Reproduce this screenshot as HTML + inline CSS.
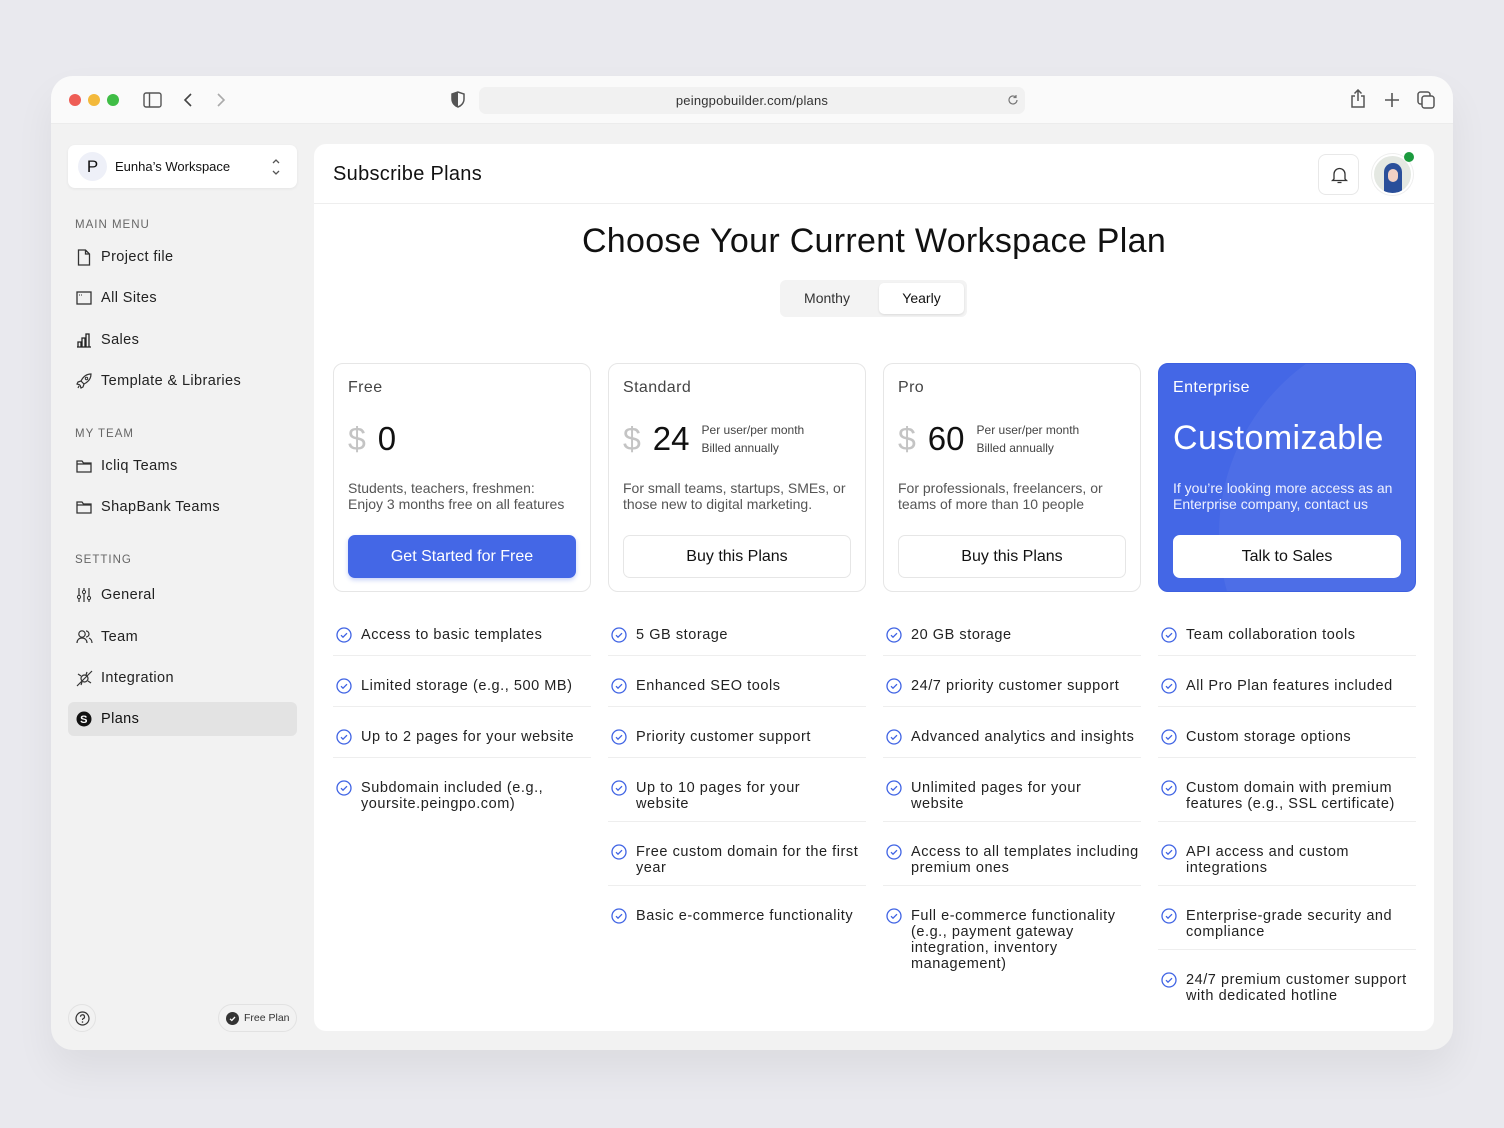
<!DOCTYPE html>
<html><head><meta charset="utf-8">
<style>
*{box-sizing:border-box;margin:0;padding:0}
body{width:1504px;height:1128px;background:#e9e9ee;font-family:"Liberation Sans",sans-serif;color:#1a1a1a;position:relative;overflow:hidden}
.win{position:absolute;left:51px;top:76px;width:1402px;height:974px;background:#f2f2f2;border-radius:22px;overflow:hidden;box-shadow:0 20px 40px rgba(0,0,0,.06)}
.bar{position:absolute;left:0;top:0;width:100%;height:48px;background:#fafafa;border-bottom:1px solid #ececec}
.dot{position:absolute;top:18px;width:12px;height:12px;border-radius:50%}
.url{position:absolute;left:428px;top:11px;width:546px;height:27px;background:#f1f1f1;border-radius:7px;text-align:center;font-size:13px;line-height:27px;color:#333;letter-spacing:.2px}
.abs{position:absolute}
.lbl{position:absolute;left:24px;font-size:11.5px;letter-spacing:1px;color:#666}
.it{position:absolute;left:17px;width:229px;height:34px;font-size:14.5px;color:#222;line-height:34px;padding-left:33px;letter-spacing:.4px}
.it svg{position:absolute;left:8px;top:9px}
.main{position:absolute;left:263px;top:68px;width:1120px;height:887px;background:#fff;border-radius:12px}
.card{position:absolute;top:219px;width:258px;height:229px;border:1px solid #e6e6e6;border-radius:10px;padding:0 14px;overflow:hidden}
.card .nm{position:absolute;left:14px;top:15px;font-size:16px;color:#444;letter-spacing:.4px}
.price{position:absolute;left:14px;top:55px;height:40px;display:flex;align-items:center}
.price .d{font-size:32px;color:#c4c4c4;margin-right:12px}
.price .n{font-size:33px;color:#111;margin-right:12px}
.price .s{font-size:12px;color:#444;line-height:18px}
.desc{position:absolute;left:14px;top:116px;font-size:14px;color:#555;line-height:16px;width:228px}
.btn{position:absolute;left:14px;top:171px;width:228px;height:43px;border:1px solid #e6e6e6;border-radius:7px;text-align:center;line-height:41px;font-size:16px;color:#111;background:#fff}
.col{position:absolute;top:461px;width:258px}
.row{position:relative;padding:22px 0 12px 28px;font-size:14.5px;line-height:16px;color:#222;border-bottom:1px solid #eeeeee;letter-spacing:.55px}
.row:last-child{border-bottom:none}
.row svg{position:absolute;left:3px;top:22px}
</style></head><body>
<div class="win">
 <div class="bar">
  <div class="dot" style="left:18px;background:#ee5d55"></div>
  <div class="dot" style="left:37px;background:#f3b93b"></div>
  <div class="dot" style="left:56px;background:#3fbd45"></div>
  <svg class="abs" style="left:92px;top:16px" width="19" height="16" viewBox="0 0 19 16"><rect x="1" y="1" width="17" height="14" rx="2" fill="none" stroke="#555" stroke-width="1.4"/><line x1="6.5" y1="1" x2="6.5" y2="15" stroke="#555" stroke-width="1.4"/></svg>
  <svg class="abs" style="left:132px;top:16px" width="10" height="16"><path d="M8 2L2 8l6 6" fill="none" stroke="#444" stroke-width="1.6"/></svg>
  <svg class="abs" style="left:165px;top:16px" width="10" height="16"><path d="M2 2l6 6-6 6" fill="none" stroke="#aaa" stroke-width="1.6"/></svg>
  <svg class="abs" style="left:400px;top:15px" width="14" height="17" viewBox="0 0 14 17"><path d="M7 1L1 3v5c0 4 3 7 6 8 3-1 6-4 6-8V3z" fill="none" stroke="#555" stroke-width="1.5"/><path d="M7 1v15c-3-1-6-4-6-8V3z" fill="#555"/></svg>
  <div class="url">peingpobuilder.com/plans</div>
  <svg class="abs" style="left:956px;top:18px" width="12" height="12" viewBox="0 0 12 12"><path d="M10 6a4 4 0 1 1-1.2-2.9M9 1v2.5H6.5" fill="none" stroke="#777" stroke-width="1.2"/></svg>
  <svg class="abs" style="left:1299px;top:13px" width="16" height="20" viewBox="0 0 16 20"><path d="M5 7H2v11h12V7h-3M8 1v11M4.5 4.5L8 1l3.5 3.5" fill="none" stroke="#555" stroke-width="1.5"/></svg>
  <svg class="abs" style="left:1333px;top:16px" width="16" height="16"><path d="M8 1v14M1 8h14" stroke="#555" stroke-width="1.6"/></svg>
  <svg class="abs" style="left:1366px;top:15px" width="18" height="18" viewBox="0 0 18 18"><rect x="1" y="1" width="12" height="12" rx="2.5" fill="none" stroke="#555" stroke-width="1.5"/><rect x="5" y="5" width="12" height="12" rx="2.5" fill="#fafafa" stroke="#555" stroke-width="1.5"/></svg>
 </div>

 <div class="abs" style="left:17px;top:69px;width:229px;height:43px;background:#fff;border-radius:7px;box-shadow:0 1px 3px rgba(0,0,0,.06)">
  <div class="abs" style="left:10px;top:7px;width:29px;height:29px;border-radius:50%;background:#eef0f8;text-align:center;line-height:29px;font-size:17px;color:#111">P</div>
  <div class="abs" style="left:47px;top:14px;font-size:13px;color:#111">Eunha’s Workspace</div>
  <svg class="abs" style="left:202px;top:11px" width="12" height="22"><path d="M3 7l3-3 3 3M3 15l3 3 3-3" fill="none" stroke="#555" stroke-width="1.3"/></svg>
 </div>
 <div class="lbl" style="top:143px">MAIN MENU</div>
 <div class="it" style="top:164px"><svg width="16" height="17" viewBox="0 0 16 17"><path d="M2.5 1h7l4 4v11h-11z M9.5 1v4h4" fill="none" stroke="#333" stroke-width="1.3"/></svg>Project file</div>
 <div class="it" style="top:205px"><svg width="16" height="16" viewBox="0 0 16 16"><rect x="1" y="2" width="14" height="12" fill="none" stroke="#333" stroke-width="1.3"/><path d="M3 5h1M5 5h1" stroke="#333"/></svg>All Sites</div>
 <div class="it" style="top:247px;font-weight:500"><svg width="16" height="16" viewBox="0 0 16 16"><path d="M1 15h14M2 15V10h3v5M6 15V6h3v9M10 15V2h3v13" fill="none" stroke="#222" stroke-width="1.3"/></svg>Sales</div>
 <div class="it" style="top:288px"><svg width="16" height="16" viewBox="0 0 16 16"><path d="M15 1c-5 0-8 3-10 7l3 3c4-2 7-5 7-10zM5 8l-3 1-1 2 3 1M8 11l-1 3-2 1-1-3M3 13l-1 2" fill="none" stroke="#333" stroke-width="1.2"/><circle cx="10.5" cy="5.5" r="1.2" fill="none" stroke="#333"/></svg>Template &amp; Libraries</div>
 <div class="lbl" style="top:352px">MY TEAM</div>
 <div class="it" style="top:373px"><svg width="16" height="16" viewBox="0 0 16 16"><path d="M1 3h5l1.5 2H15v9H1z M1 6h14" fill="none" stroke="#333" stroke-width="1.3"/></svg>Icliq Teams</div>
 <div class="it" style="top:414px"><svg width="16" height="16" viewBox="0 0 16 16"><path d="M1 3h5l1.5 2H15v9H1z M1 6h14" fill="none" stroke="#333" stroke-width="1.3"/></svg>ShapBank Teams</div>
 <div class="lbl" style="top:478px">SETTING</div>
 <div class="it" style="top:502px"><svg width="16" height="16" viewBox="0 0 16 16"><path d="M3 1v14M8 1v14M13 1v14" stroke="#333" stroke-width="1.2"/><circle cx="3" cy="10" r="1.6" fill="#f2f2f2" stroke="#333"/><circle cx="8" cy="5" r="1.6" fill="#f2f2f2" stroke="#333"/><circle cx="13" cy="11" r="1.6" fill="#f2f2f2" stroke="#333"/></svg>General</div>
 <div class="it" style="top:544px"><svg width="17" height="16" viewBox="0 0 17 16"><circle cx="6" cy="5" r="3.2" fill="none" stroke="#333" stroke-width="1.2"/><path d="M1 14c0-3 2-5 5-5s5 2 5 5M10 2a3 3 0 0 1 0 6M13 9c2 1 3 3 3 5" fill="none" stroke="#333" stroke-width="1.2"/></svg>Team</div>
 <div class="it" style="top:585px"><svg width="17" height="17" viewBox="0 0 17 17"><circle cx="8.5" cy="8.5" r="3.5" fill="none" stroke="#333" stroke-width="1.2"/><path d="M1 16L16 1M2 4l3 2M12 11l3 2M11 2l-1 3M6 12l-1 3" stroke="#333" stroke-width="1.2"/></svg>Integration</div>
 <div class="it" style="top:626px;background:#e3e3e3;border-radius:6px;font-weight:500;color:#111"><svg width="16" height="16" viewBox="0 0 16 16"><circle cx="8" cy="8" r="7.5" fill="#111"/><text x="8" y="12" font-size="11" font-weight="bold" fill="#fff" text-anchor="middle" font-family="Liberation Sans">S</text></svg>Plans</div>
 <div class="abs" style="left:17px;top:928px;width:28px;height:28px;border-radius:50%;border:1px solid #e2e2e2"><svg class="abs" style="left:6px;top:6px" width="15" height="15" viewBox="0 0 15 15"><circle cx="7.5" cy="7.5" r="6.5" fill="none" stroke="#333" stroke-width="1.2"/><path d="M5.5 5.8a2 2 0 1 1 2.6 1.9c-.6.3-.6.7-.6 1.3" fill="none" stroke="#333" stroke-width="1.2"/><circle cx="7.5" cy="11" r=".8" fill="#333"/></svg></div>
 <div class="abs" style="left:167px;top:928px;width:79px;height:28px;border-radius:14px;border:1px solid #e2e2e2;font-size:10.5px;color:#333;line-height:26px;padding-left:25px">Free Plan<svg class="abs" style="left:7px;top:7px" width="13" height="13"><circle cx="6.5" cy="6.5" r="6.5" fill="#333"/><path d="M4 6.8l1.8 1.7L9 5" fill="none" stroke="#fff" stroke-width="1.3"/></svg></div>

 <div class="main">
  <div class="abs" style="left:19px;top:19px;font-size:20px;color:#111;letter-spacing:.3px">Subscribe Plans</div>
  <div class="abs" style="left:0;top:59px;width:100%;height:1px;background:#eeeeee"></div>
  <div class="abs" style="left:1004px;top:10px;width:41px;height:41px;border:1px solid #e8e8e8;border-radius:8px"><svg class="abs" style="left:12px;top:11px" width="17" height="18" viewBox="0 0 17 18"><path d="M3 13V8a5.5 5.5 0 0 1 11 0v5l1.5 1.5h-14z M6.5 16.5h4" fill="none" stroke="#333" stroke-width="1.3"/></svg></div>
  <div class="abs" style="left:1058px;top:10px;width:41px;height:41px;border-radius:50%;background:#e4e8e2;overflow:hidden;border:2px solid #fff;box-shadow:0 0 0 1px #eee">
   <div class="abs" style="left:10px;top:7px;width:18px;height:34px;background:#2a4f9a;border-radius:9px 9px 2px 2px"></div>
   <div class="abs" style="left:14px;top:13px;width:10px;height:13px;background:#f1d0c4;border-radius:5px"></div>
  </div>
  <div class="abs" style="left:1090px;top:8px;width:10px;height:10px;border-radius:50%;background:#1b9a3e"></div>

  <div class="abs" style="left:0;top:78px;width:1120px;text-align:center;font-size:34px;color:#111;letter-spacing:.3px">Choose Your Current Workspace Plan</div>
  <div class="abs" style="left:466px;top:136px;width:187px;height:37px;background:#f3f3f3;border-radius:6px">
   <div class="abs" style="left:0;top:0;width:94px;height:37px;text-align:center;line-height:37px;font-size:14px;color:#333">Monthy</div>
   <div class="abs" style="left:99px;top:3px;width:85px;height:31px;background:#fff;border-radius:5px;box-shadow:0 1px 2px rgba(0,0,0,.1);text-align:center;line-height:31px;font-size:14px;color:#111">Yearly</div>
  </div>

  <div class="card" style="left:19px"><div class="nm">Free</div>
   <div class="price"><span class="d">$</span><span class="n">0</span></div>
   <div class="desc">Students, teachers, freshmen:<br>Enjoy 3 months free on all features</div>
   <div class="btn" style="background:#4467e6;border-color:#4467e6;color:#fff;box-shadow:0 2px 5px rgba(68,103,230,.3)">Get Started for Free</div></div>
  <div class="card" style="left:294px"><div class="nm">Standard</div>
   <div class="price"><span class="d">$</span><span class="n">24</span><span class="s">Per user/per month<br>Billed annually</span></div>
   <div class="desc">For small teams, startups, SMEs, or those new to digital marketing.</div>
   <div class="btn">Buy this Plans</div></div>
  <div class="card" style="left:569px"><div class="nm">Pro</div>
   <div class="price"><span class="d">$</span><span class="n">60</span><span class="s">Per user/per month<br>Billed annually</span></div>
   <div class="desc">For professionals, freelancers, or teams of more than 10 people</div>
   <div class="btn">Buy this Plans</div></div>
  <div class="card" style="left:844px;background:#4467e6;border-color:#3d60e0">
   <div class="abs" style="left:60px;top:-40px;width:420px;height:420px;border-radius:50%;background:rgba(255,255,255,.05)"></div>
   <div class="nm" style="color:#fff">Enterprise</div>
   <div class="abs" style="left:14px;top:55px;font-size:34px;color:#fff;letter-spacing:.4px">Customizable</div>
   <div class="desc" style="color:#eef1ff;width:235px">If you’re looking more access as an Enterprise company, contact us</div>
   <div class="btn" style="border-color:#fff">Talk to Sales</div></div>

  <div class="col" style="left:19px">
   <div class="row">Access to basic templates</div>
   <div class="row">Limited storage (e.g., 500 MB)</div>
   <div class="row">Up to 2 pages for your website</div>
   <div class="row">Subdomain included (e.g., yoursite.peingpo.com)</div>
  </div>
  <div class="col" style="left:294px">
   <div class="row">5 GB storage</div>
   <div class="row">Enhanced SEO tools</div>
   <div class="row">Priority customer support</div>
   <div class="row">Up to 10 pages for your<br>website</div>
   <div class="row">Free custom domain for the first year</div>
   <div class="row">Basic e-commerce functionality</div>
  </div>
  <div class="col" style="left:569px">
   <div class="row">20 GB storage</div>
   <div class="row">24/7 priority customer support</div>
   <div class="row">Advanced analytics and insights</div>
   <div class="row">Unlimited pages for your<br>website</div>
   <div class="row">Access to all templates including premium ones</div>
   <div class="row">Full e-commerce functionality (e.g., payment gateway integration, inventory management)</div>
  </div>
  <div class="col" style="left:844px">
   <div class="row">Team collaboration tools</div>
   <div class="row">All Pro Plan features included</div>
   <div class="row">Custom storage options</div>
   <div class="row">Custom domain with premium features (e.g., SSL certificate)</div>
   <div class="row">API access and custom integrations</div>
   <div class="row">Enterprise-grade security and compliance</div>
   <div class="row">24/7 premium customer support with dedicated hotline</div>
  </div>
 </div>
</div>
<script>
document.querySelectorAll('.row').forEach(function(r){r.insertAdjacentHTML('afterbegin','<svg width="16" height="16" viewBox="0 0 16 16"><circle cx="8" cy="8" r="7" fill="none" stroke="#3f63e4" stroke-width="1.3"/><path d="M5 8.2l2 2 4-4" fill="none" stroke="#3f63e4" stroke-width="1.3"/></svg>');if(r.offsetHeight>60)r.style.paddingBottom='9px';});
</script>
</body></html>
